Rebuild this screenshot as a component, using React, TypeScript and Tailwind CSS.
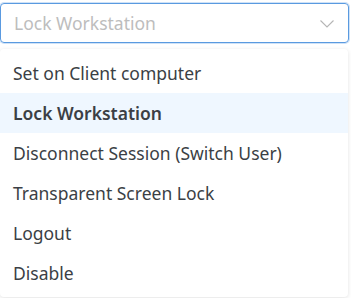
const options = [
  'Set on Client computer',
  'Lock Workstation',
  'Disconnect Session (Switch User)',
  'Transparent Screen Lock',
  'Logout',
  'Disable',
];

export default function App() {
  const selected = 'Lock Workstation';
  return (
    <div className="w-[351px] h-[298px] bg-white pt-[3px] pr-[2px] font-['Noto_Sans',sans-serif] text-[17.5px]">
      <div className="h-[40px] flex items-center justify-between pl-[13px] pr-[14px] border border-[#5a9ae0] rounded-[4px] shadow-[0_0_0_1px_#cfe2f7]">
        <span className="text-[#bdbdbd]">{selected}</span>
        <svg width="14" height="8" viewBox="0 0 14 8" fill="none" className="mt-[2px]">
          <polyline points="0.5,0.5 7,7 13.5,0.5" stroke="#b5b5b5" strokeWidth="1.1" />
        </svg>
      </div>
      <div className="mt-[6px] mr-[1px] py-[4px] bg-white rounded-[4px] shadow-[0_1px_4px_rgba(0,0,0,0.12)]">
        {options.map((o) => (
          <div
            key={o}
            className={
              o === selected
                ? 'h-[40px] flex items-center px-[13px] bg-[#eff7ff] text-[#3b3f45] font-semibold'
                : 'h-[40px] flex items-center px-[13px] text-[#3b3f45]'
            }
          >
            {o}
          </div>
        ))}
      </div>
    </div>
  );
}
